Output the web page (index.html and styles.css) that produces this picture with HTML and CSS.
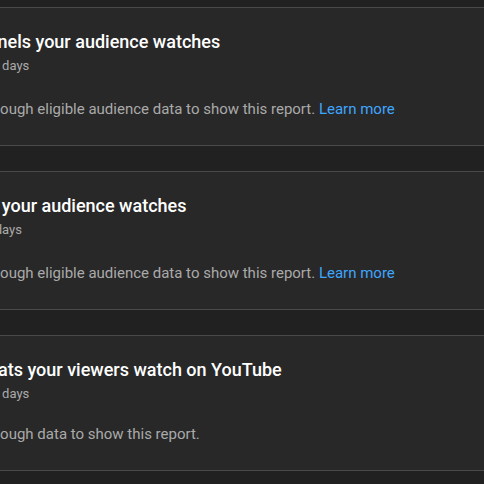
FILE: index.html
```html
<!DOCTYPE html>
<html lang="en">
<head>
<meta charset="utf-8">
<title>Audience</title>
<link rel="stylesheet" href="styles.css">
</head>
<body>
<main class="cards">
  <section class="card">
    <h2 class="card-title">Channels your audience watches</h2>
    <p class="card-sub">Last 28 days</p>
    <p class="card-body">Not enough eligible audience data to show this report. <a class="link" href="#">Learn more</a></p>
  </section>
  <section class="card">
    <h2 class="card-title">Apps your audience watches</h2>
    <p class="card-sub">Last 7 days</p>
    <p class="card-body">Not enough eligible audience data to show this report. <a class="link" href="#">Learn more</a></p>
  </section>
  <section class="card">
    <h2 class="card-title">Formats your viewers watch on YouTube</h2>
    <p class="card-sub">Last 28 days</p>
    <p class="card-body card-body-plain">Not enough data to show this report.</p>
  </section>
</main>
</body>
</html>
```

FILE: styles.css
```css
html, body {
  margin: 0;
  padding: 0;
  background: #212121;
  overflow: hidden;
  height: 100%;
}

body {
  font-family: Roboto, "Liberation Sans", Arial, sans-serif;
}

.cards {
  margin-left: -69px;
  padding-top: 7px;
  width: 640px;
  display: flex;
  flex-direction: column;
  gap: 25px;
}

.card {
  background: #282828;
  border: 1px solid #4a4a4a;
  padding: 22px 24px 26px;
  display: flex;
  flex-direction: column;
}

.card-title {
  margin: 0;
  font-size: 18px;
  line-height: 24px;
  font-weight: 500;
  color: #ffffff;
  white-space: nowrap;
}

.card-sub {
  margin: 3px 0 0;
  font-size: 13px;
  line-height: 18px;
  color: #aaaaaa;
  white-space: nowrap;
}

.card-body {
  margin: 24px 0 0;
  font-size: 15px;
  line-height: 20px;
  color: #aaaaaa;
  white-space: nowrap;
}

.card-body-plain {
  margin-top: 21px;
}

.link {
  color: #3ea6ff;
  text-decoration: none;
}
```
